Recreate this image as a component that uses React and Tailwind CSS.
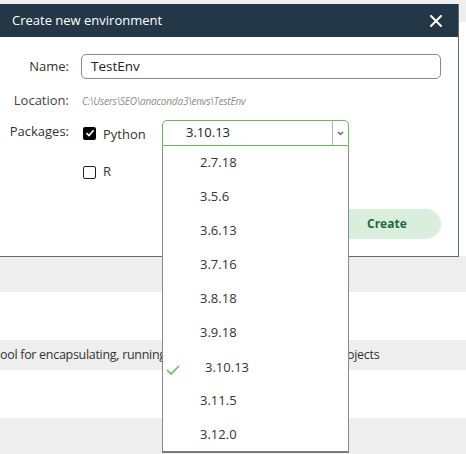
import React from "react";

const versions = ["2.7.18", "3.5.6", "3.6.13", "3.7.16", "3.8.18", "3.9.18", "3.10.13", "3.11.5", "3.12.0"];

export default function App() {
  return (
    <div
      className="relative w-[466px] h-[454px] overflow-hidden bg-white text-[#333]"
      style={{ fontFamily: '"Open Sans", "Noto Sans", sans-serif' }}
    >
      {/* background list rows */}
      <div className="flex flex-col w-full">
        <div className="h-[22px] bg-[#eeeeee]" />
        <div className="h-[234px] bg-white" />
        <div className="h-[36px] bg-[#eeeeee]" />
        <div className="h-[48px] bg-white" />
        <div className="h-[30px] bg-[#eeeeee] flex items-center whitespace-nowrap text-[12.5px] tracking-[-0.3px]">
          <span className="w-[162px] overflow-hidden shrink-0">ool for encapsulating, running, and</span>
          <span className="ml-[185px]">ojects</span>
        </div>
        <div className="h-[48px] bg-white" />
        <div className="h-[36px] bg-[#eeeeee]" />
      </div>

      {/* dialog */}
      <div className="absolute left-0 top-[4px] w-[459px] h-[253px] bg-white border-r border-b border-[#5e6d79] flex flex-col">
        <div className="h-[33px] bg-[#243746] flex items-center justify-between pl-[12px] pr-[16px] text-white text-[13px] shrink-0">
          <span>Create new environment</span>
          <svg width="12" height="12" viewBox="0 0 12 12">
            <path d="M1 1 L11 11 M11 1 L1 11" stroke="white" strokeWidth="2" strokeLinecap="round" />
          </svg>
        </div>

        {/* Name */}
        <div className="flex items-center h-[25px] mt-[17px]">
          <div className="w-[69px] text-right text-[13px]">Name:</div>
          <div className="ml-[12px] w-[360px] h-[25px] border border-[#8a8a8a] rounded-[5px] flex items-center pl-[9px] text-[13.5px] text-[#222]">
            TestEnv
          </div>
        </div>

        {/* Location */}
        <div className="flex items-center h-[20px] mt-[12px]">
          <div className="w-[69px] text-right text-[13px] text-[#444]">Location:</div>
          <div className="ml-[13px] text-[10px] italic text-[#8c8c8c] tracking-[-0.2px]">
            C:\Users\SEO\anaconda3\envs\TestEnv
          </div>
        </div>

        {/* Packages */}
        <div className="flex items-center h-[26px] mt-[9px]">
          <div className="w-[69px] text-right text-[13px] -mt-[2px]">Packages:</div>
          <div className="ml-[14px] w-[13px] h-[13px] bg-black rounded-[2px] flex items-center justify-center">
            <svg width="10" height="10" viewBox="0 0 10 10">
              <path d="M1.5 5.2 L4 7.6 L8.6 2.2" stroke="white" strokeWidth="1.7" fill="none" />
            </svg>
          </div>
          <div className="ml-[7px] w-[59px] text-[13px] mt-[3px]">Python</div>
          <div className="w-[187px] h-[26px] border border-[#6cb65a] rounded-t-[5px] flex items-center">
            <div className="flex-1 pl-[23px] text-[13px] text-[#222]">3.10.13</div>
            <div className="w-[16px] h-[24px] border-l border-[#b5b5b5] flex items-center justify-center">
              <svg width="7" height="5" viewBox="0 0 7 5">
                <path d="M1 1 L3.5 3.5 L6 1" stroke="#555" strokeWidth="1.2" fill="none" />
              </svg>
            </div>
          </div>
        </div>

        {/* R */}
        <div className="flex items-center h-[20px] mt-[16px]">
          <div className="ml-[83px] w-[13px] h-[13px] border-[1.5px] border-[#222] rounded-[2px] bg-white" />
          <div className="ml-[7px] text-[13px]">R</div>
        </div>

        {/* Create */}
        <div className="flex justify-end pr-[17px] mt-[27px]">
          <div className="w-[140px] h-[30px] rounded-full bg-[#d9eedd] flex items-center pl-[66px] text-[12px] font-bold text-[#1d6a3b]">
            Create
          </div>
        </div>
      </div>

      {/* dropdown list */}
      <div className="absolute left-[162px] top-[146px] w-[187px] h-[307px] bg-white border border-t-0 border-[#8a8a8a] border-b-2 border-b-[#7a7a7a] flex flex-col">
        {versions.map((v) => {
          const sel = v === "3.10.13";
          return (
            <div key={v} className="h-[34px] flex items-center relative text-[13px] text-[#333] shrink-0">
              {sel && (
                <svg className="absolute left-[3px] top-[15px]" width="14" height="10" viewBox="0 0 14 10">
                  <path d="M1 5 L5 9 L13 1" stroke="#5cb85c" strokeWidth="1.5" fill="none" />
                </svg>
              )}
              <span className={sel ? "pl-[42px] pt-[2px]" : "pl-[37px]"}>{v}</span>
            </div>
          );
        })}
      </div>
    </div>
  );
}
